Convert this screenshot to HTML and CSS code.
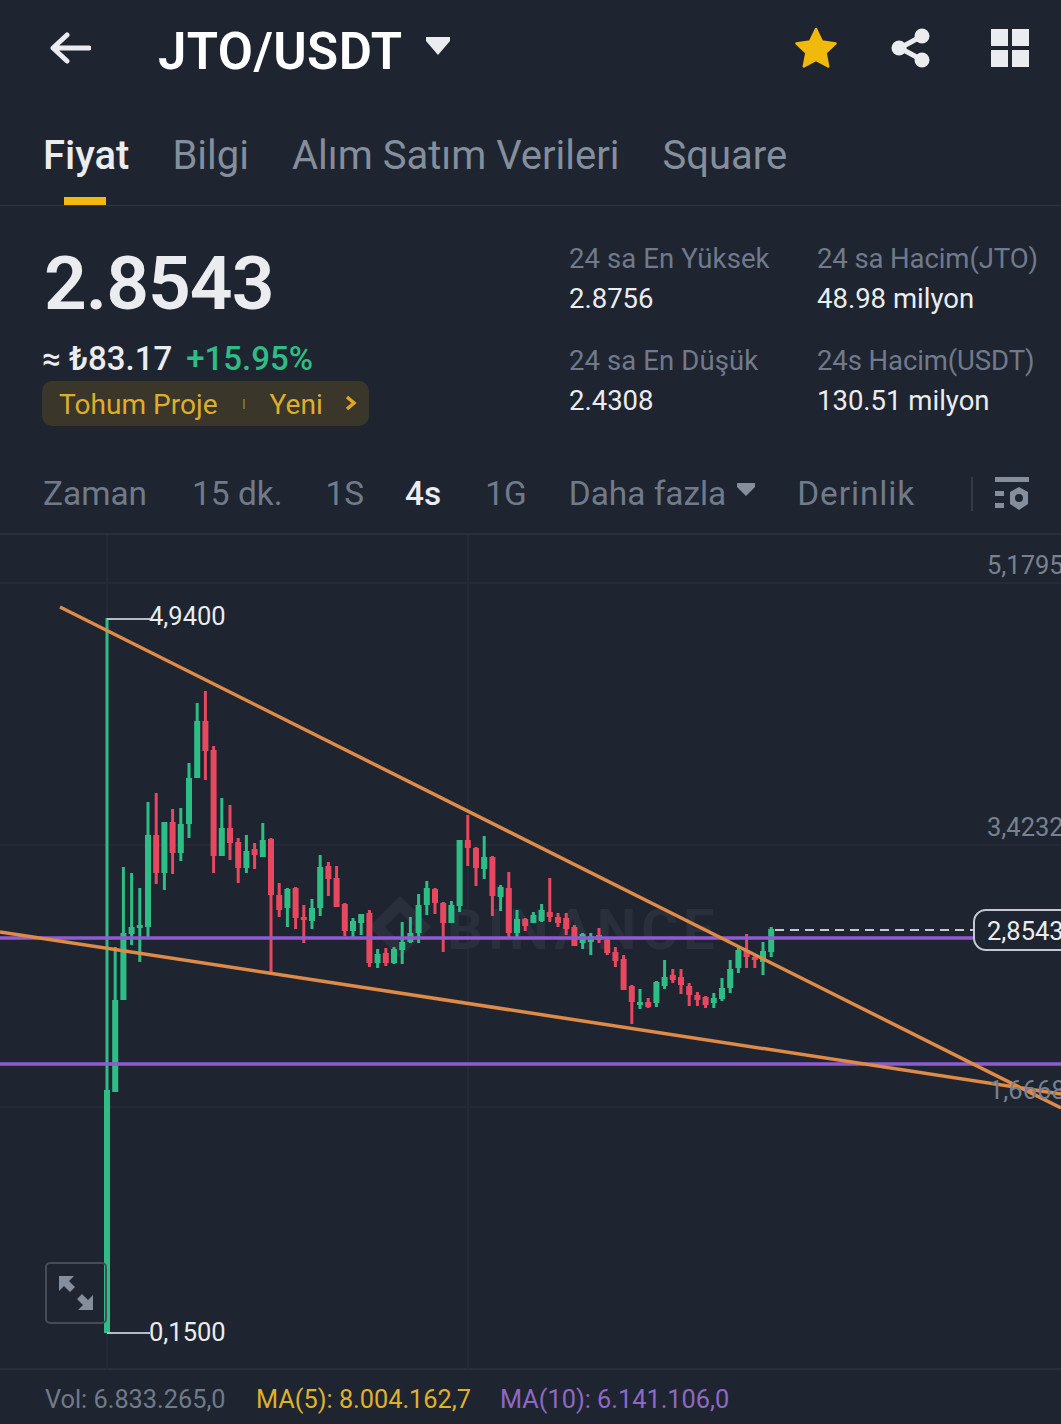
FILE: index.html
```html
<!DOCTYPE html>
<html lang="tr">
<head>
  <meta charset="UTF-8" />
  <meta name="viewport" content="width=device-width, initial-scale=1.0" />
  <title>JTO/USDT</title>
  <link rel="stylesheet" href="styles.css">
</head>
<body>
  <header class="top-bar">
    <svg class="back-icon" viewBox="0 0 42 32" width="42" height="32">
      <path d="M40 16H5M18 3L4 16l14 13" fill="none" stroke="#eaecef" stroke-width="5" stroke-linecap="round" stroke-linejoin="round"/>
    </svg>
    <h1 class="pair">JTO/USDT</h1>
    <svg class="pair-caret" viewBox="0 0 26 20" width="26" height="20"><path d="M1 1h24v4L13 19 1 5z" fill="#eaecef"/></svg>
    <div class="top-actions">
      <svg viewBox="0 0 44 44" width="44" height="44">
        <path d="M22 3l6 12.600 13.600 1.800-10 9.500 2.600 13.600L22 33.800 9.800 40.500l2.600-13.600-10-9.500L16 15.600z" fill="#f0b90b" stroke="#f0b90b" stroke-width="2.500" stroke-linejoin="round"/>
      </svg>
      <svg viewBox="0 0 44 44" width="44" height="44">
        <path d="M33 10L11 22l22 12" fill="none" stroke="#eaecef" stroke-width="5"/>
        <circle cx="33" cy="10" r="7.500" fill="#eaecef"/><circle cx="10" cy="22" r="7.500" fill="#eaecef"/><circle cx="33" cy="34" r="7.500" fill="#eaecef"/>
      </svg>
      <svg class="grid-icon" viewBox="0 0 38 38" width="38" height="38">
        <path d="M0 0h17v17H0zM21 0h17v17H21zM0 21h17v17H0zM21 21h17v17H21z" fill="#eaecef"/>
      </svg>
    </div>
  </header>

  <nav class="tabs">
    <a class="tab active">Fiyat</a>
    <a class="tab">Bilgi</a>
    <a class="tab">Alım Satım Verileri</a>
    <a class="tab">Square</a>
  </nav>

  <section class="summary">
    <div class="price-block">
      <div class="last-price">2.8543</div>
      <div class="price-sub">
        <span class="approx">≈ ₺83.17</span>
        <span class="change">+15.95%</span>
      </div>
      <div class="tag-row">
        <span>Tohum Proje</span>
        <i class="tag-sep"></i>
        <span>Yeni</span>
        <svg viewBox="0 0 12 16" width="12" height="16"><path d="M2 2l7 6-7 6" fill="none" stroke="#e0a526" stroke-width="3.500"/></svg>
      </div>
    </div>
    <div class="stats">
      <div class="stat"><span>24 sa En Yüksek</span><b>2.8756</b></div>
      <div class="stat"><span>24 sa Hacim(JTO)</span><b>48.98 milyon</b></div>
      <div class="stat"><span>24 sa En Düşük</span><b>2.4308</b></div>
      <div class="stat"><span>24s Hacim(USDT)</span><b>130.51 milyon</b></div>
    </div>
  </section>

  <div class="intervals">
    <a class="int-zaman">Zaman</a>
    <a class="int-15">15 dk.</a>
    <a class="int-1s">1S</a>
    <a class="int-4s active">4s</a>
    <a class="int-1g">1G</a>
    <a class="int-more">Daha fazla</a>
    <svg class="more-caret" viewBox="0 0 18 13" width="18" height="13"><path d="M0 0h18v4l-9 9-9-9z" fill="#848e9c"/></svg>
    <a class="int-depth">Derinlik</a>
    <i class="int-sep"></i>
    <svg class="int-settings" viewBox="0 0 34 34" width="34" height="34">
      <path d="M0 0h34v5H0zM0 14h9v5H0zM0 26h9v5H0z" fill="#848e9c"/>
      <path d="M24 10l9 5v12l-9 6-9-6V15z" fill="#848e9c"/>
      <circle cx="24" cy="21" r="4" fill="#1e2530"/>
    </svg>
  </div>

  <main class="chart">
    <svg id="chartSvg" class="chart-svg" viewBox="0 535 1061 835" width="1061" height="835">
      <g class="grid">
        <path d="M0 583H1061M0 845H1061M0 1107H1061M107 535V1370M468 535V1370"/>
      </g>
      <g class="watermark">
        <path d="M400 896l31 31-31 31-31-31zM400 912l15 15-15 15-15-15z" fill-rule="evenodd"/>
        <text x="447" y="949">BINANCE</text>
      </g>
      <g id="candles"></g>
      <path class="line-purple" d="M0 938H973M0 1064H1061"/>
      <path class="line-orange" d="M60 607L1061 1108M0 932L1061 1094"/>
      <path class="line-last" d="M775 930H973"/>
      <path class="line-mark" d="M107 619H150M107 1333H150"/>
      <text class="mark-label" x="149" y="625">4,9400</text>
      <text class="mark-label" x="149" y="1341">0,1500</text>
      <text class="axis-label" x="987" y="574">5,1795</text>
      <text class="axis-label" x="987" y="836">3,4232</text>
      <text class="axis-label" x="989" y="1099">1,6668</text>
      <rect class="last-box" x="974" y="910" width="110" height="40" rx="12"/>
      <text class="last-label" x="987" y="940">2,8543</text>
    </svg>
    <div class="expand-btn">
      <svg viewBox="0 0 36 36" width="36" height="36">
        <path d="M1 1h15L11 6l6 6-5 5-6-6-5 5zM35 35H20l5-5-6-6 5-5 6 6 5-5z" fill="#848e9c"/>
      </svg>
    </div>
  </main>

  <footer class="ma-row">
    <span class="vol">Vol: 6.833.265,0</span>
    <span class="ma5">MA(5): 8.004.162,7</span>
    <span class="ma10">MA(10): 6.141.106,0</span>
  </footer>

  <script src="chart.js"></script>
</body>
</html>
```

FILE: styles.css
```css
* {
  box-sizing: border-box;
}

body {
  font-family: Roboto, "Noto Sans", sans-serif;
  background: #1e2530;
  color: #eaecef;
  margin: 0;
  width: 1061px;
  height: 1424px;
  overflow: hidden;
}

.top-bar {
  display: flex;
  align-items: center;
  height: 96px;
  padding-left: 49px;
}

.pair {
  margin: 6px 0 0 67px;
  font-size: 51px;
  font-weight: 600;
  color: #fff;
  line-height: 1;
  letter-spacing: 0.4px;
}

.pair-caret {
  margin: -4px 0 0 22px;
}

.top-actions {
  display: flex;
  align-items: center;
  gap: 51px;
  margin-left: auto;
  padding-right: 32px;
}

.grid-icon {
  margin-left: 7px;
}

.tabs {
  display: flex;
  gap: 43px;
  height: 110px;
  padding: 37px 0 0 43px;
  border-bottom: 1px solid #2f3640;
}

.tab {
  position: relative;
  font-size: 40px;
  line-height: 46px;
  color: #848e9c;
}

.tab.active {
  color: #eaecef;
  font-weight: 500;
}

.tab.active::after {
  content: "";
  position: absolute;
  left: 21px;
  bottom: 0;
  width: 42px;
  height: 8px;
  background: #f0b90b;
}

.summary {
  display: flex;
  height: 228px;
}

.price-block {
  width: 569px;
  padding: 37px 0 0 42px;
}

.last-price {
  font-size: 75px;
  font-weight: 600;
  line-height: 80px;
  letter-spacing: -1px;
  margin-left: 2px;
}

.price-sub {
  display: flex;
  gap: 14px;
  margin-top: 17px;
  font-size: 33px;
  line-height: 38px;
  font-weight: 500;
}

.change {
  color: #2ebd85;
}

.tag-row {
  display: inline-flex;
  align-items: center;
  height: 45px;
  width: 327px;
  margin-top: 3px;
  padding: 1px 0 0 17px;
  background: #3a3629;
  border-radius: 10px;
  color: #dcae2c;
  font-size: 28.100px;
}

.tag-sep {
  width: 2px;
  height: 10px;
  margin: 0 25px;
  background: #7a6a2e;
}

.tag-row svg {
  margin: -2px 0 0 22px;
}

.stats {
  display: grid;
  grid-template-columns: 248px auto;
  align-content: start;
  row-gap: 28px;
  padding-top: 36px;
}

.stat span {
  display: block;
  font-size: 27.500px;
  line-height: 34px;
  letter-spacing: 0.1px;
  color: #707a8a;
}

.stat:nth-child(even) span {
  letter-spacing: -0.1px;
}

.stat b {
  display: block;
  font-size: 27.500px;
  line-height: 34px;
  margin-top: 6px;
  font-weight: 400;
}

.intervals {
  display: flex;
  align-items: center;
  height: 101px;
  padding: 20px 0 0 43px;
  font-size: 33.400px;
  color: #707a8a;
  border-bottom: 2px solid #2a303a;
}

.intervals a {
  white-space: nowrap;
}

.int-15 { margin-left: 45px; }
.int-1s { margin-left: 43px; }
.int-4s { margin-left: 41px; color: #eaecef; font-weight: 500; }
.int-1g { margin-left: 44px; }
.int-more { margin-left: 42px; }
.more-caret { margin: -8px 0 0 11px; }
.int-depth { margin-left: 42px; letter-spacing: 0.9px; }

.int-sep {
  width: 2px;
  height: 34px;
  margin-left: 56px;
  background: #363c47;
}

.int-settings {
  margin-left: 22px;
}

.chart {
  position: relative;
  height: 835px;
  border-bottom: 2px solid #2a303a;
}

.chart-svg {
  display: block;
}

.grid path {
  stroke: #272d38;
  stroke-width: 1.500;
  fill: none;
}

.watermark path {
  fill: #2a303b;
}

.watermark text {
  font-size: 56px;
  font-weight: 700;
  letter-spacing: 5px;
  fill: #2a303b;
}

.line-purple {
  stroke: #8f5bd1;
  stroke-width: 3.500;
  fill: none;
}

.line-orange {
  stroke: #df8a47;
  stroke-width: 3.500;
  fill: none;
}

.line-last {
  stroke: #c5c9cf;
  stroke-width: 2;
  stroke-dasharray: 9 6;
  fill: none;
}

.line-mark {
  stroke: #b7bdc6;
  stroke-width: 2;
  fill: none;
}

.mark-label,
.last-label {
  font-size: 25.500px;
  fill: #eaecef;
}

.axis-label {
  font-size: 25.500px;
  fill: #78818f;
}

.last-box {
  fill: #1e2530;
  stroke: #c5c9cf;
  stroke-width: 2;
}

.expand-btn {
  position: absolute;
  left: 45px;
  top: 727px;
  width: 62px;
  height: 62px;
  display: flex;
  align-items: center;
  justify-content: center;
  border: 2px solid #474d57;
  border-radius: 5px;
}

.ma-row {
  display: flex;
  align-items: center;
  height: 55px;
  padding: 3px 0 0 45px;
  font-size: 25.300px;
}

.vol { color: #707a8a; width: 211px; }
.ma5 { color: #dfb12c; width: 244px; }
.ma10 { color: #8f68c4; }
```

FILE: chart.js
```js
// wickTop, bodyTop, bodyBottom, wickBottom, in page pixels
const candles = [
  ["g", 618, 1090, 1333, 1333], ["g", 947, 1000, 1092, 1092], ["g", 867, 933, 1000, 1000],
  ["g", 873, 927, 934, 945], ["g", 888, 925, 928, 962], ["g", 802, 835, 927, 937],
  ["r", 793, 835, 873, 884], ["g", 822, 822, 873, 890], ["r", 809, 822, 853, 874],
  ["g", 808, 824, 853, 861], ["g", 763, 778, 824, 838], ["g", 703, 721, 778, 778],
  ["r", 691, 721, 751, 780], ["r", 746, 750, 856, 873], ["g", 798, 828, 856, 856],
  ["r", 805, 828, 843, 860], ["r", 838, 842, 868, 883], ["g", 835, 851, 868, 873],
  ["r", 843, 849, 855, 869], ["g", 823, 840, 857, 857], ["r", 838, 839, 895, 975],
  ["r", 883, 895, 910, 917], ["g", 888, 889, 908, 927], ["r", 887, 888, 918, 929],
  ["r", 905, 917, 919, 943], ["g", 899, 908, 921, 929], ["g", 855, 867, 908, 916],
  ["r", 862, 866, 879, 896], ["r", 866, 878, 907, 907], ["r", 903, 904, 931, 936],
  ["g", 918, 921, 931, 937], ["g", 914, 914, 923, 935], ["r", 910, 913, 963, 967],
  ["g", 949, 954, 963, 968], ["r", 948, 953, 963, 966], ["g", 947, 949, 963, 964],
  ["g", 922, 942, 950, 964], ["g", 917, 933, 942, 943], ["g", 894, 905, 933, 943],
  ["g", 881, 888, 905, 915], ["r", 888, 889, 903, 914], ["r", 902, 903, 923, 952],
  ["g", 901, 905, 923, 923], ["g", 840, 840, 906, 912], ["r", 815, 840, 848, 866],
  ["r", 847, 848, 868, 886], ["g", 836, 857, 869, 879], ["r", 856, 857, 896, 916],
  ["g", 885, 887, 897, 911], ["r", 872, 888, 933, 937], ["g", 910, 919, 933, 937],
  ["r", 918, 919, 926, 931], ["g", 912, 915, 923, 923], ["g", 904, 910, 921, 922],
  ["r", 878, 912, 917, 922], ["r", 913, 917, 923, 927], ["r", 913, 918, 929, 935],
  ["r", 925, 927, 946, 946], ["g", 933, 934, 943, 949], ["g", 933, 936, 942, 955],
  ["r", 928, 935, 940, 943], ["r", 937, 940, 953, 955], ["r", 947, 952, 961, 967],
  ["r", 955, 959, 990, 990], ["r", 985, 986, 1002, 1024], ["g", 989, 1002, 1003, 1009],
  ["r", 998, 1002, 1007, 1008], ["g", 981, 982, 1003, 1007], ["g", 960, 977, 986, 989],
  ["r", 969, 975, 980, 983], ["r", 969, 977, 985, 994], ["r", 983, 986, 995, 1006],
  ["r", 992, 995, 1000, 1006], ["r", 996, 997, 1005, 1008], ["g", 993, 998, 1003, 1008],
  ["g", 978, 988, 999, 1001], ["g", 960, 969, 988, 993], ["g", 948, 950, 968, 973],
  ["r", 934, 950, 957, 968], ["r", 955, 957, 960, 968], ["g", 942, 951, 962, 975],
  ["g", 927, 929, 952, 957],
];

const colors = { g: "#2ebd85", r: "#e8485f" };
const group = document.getElementById("candles");
const svgNs = "http://www.w3.org/2000/svg";

function addRect(x, y, w, h, fill) {
  const rect = document.createElementNS(svgNs, "rect");
  rect.setAttribute("x", x);
  rect.setAttribute("y", y);
  rect.setAttribute("width", w);
  rect.setAttribute("height", h);
  rect.setAttribute("fill", fill);
  group.appendChild(rect);
}

candles.forEach(function (c, i) {
  const x = 107 + i * 8.2;
  addRect(x - 1.5, c[1], 3, c[4] - c[1], colors[c[0]]);
  addRect(x - 3, c[2], 6, Math.max(c[3] - c[2], 3), colors[c[0]]);
});
```
